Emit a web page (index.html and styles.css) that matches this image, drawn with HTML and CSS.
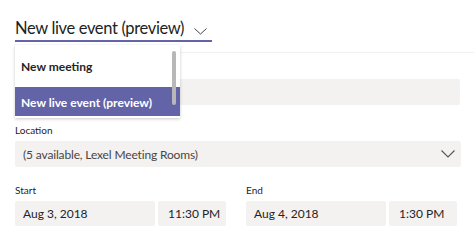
FILE: index.html
```html
<!DOCTYPE html>
<html>
<head>
<meta charset="utf-8">
<link rel="stylesheet" href="styles.css">
</head>
<body>
<div class="page">
  <div class="title-row">
    <div class="title-select">
      <span class="title-text">New live event (preview)</span>
      <svg class="chev-title" width="13" height="7" viewBox="0 0 13 7"><path d="M0.5 0.5 L6.5 6 L12.5 0.5" fill="none" stroke="#444" stroke-width="1"/></svg>
    </div>
    <div class="menu">
      <div class="menu-item">New meeting</div>
      <div class="menu-item selected">New live event (preview)</div>
      <div class="scrollbar"></div>
    </div>
  </div>
  <div class="hidden-area">
    <div class="faint-line"></div>
    <div class="field title-field"></div>
  </div>
  <div class="label loc-label">Location</div>
  <div class="field loc-field">
    <span>(5 available, Lexel Meeting Rooms)</span>
    <svg class="chev" width="14" height="8" viewBox="0 0 14 8"><path d="M0.5 0.5 L7 7 L13.5 0.5" fill="none" stroke="#555" stroke-width="1.1"/></svg>
  </div>
  <div class="times">
    <div class="group">
      <div class="label">Start</div>
      <div class="pair">
        <div class="field date">Aug 3, 2018</div>
        <div class="field time">11:30 PM</div>
      </div>
    </div>
    <div class="group">
      <div class="label">End</div>
      <div class="pair">
        <div class="field date">Aug 4, 2018</div>
        <div class="field time">1:30 PM</div>
      </div>
    </div>
  </div>
</div>
</body>
</html>
```
FILE: styles.css
```css
html, body {
  margin: 0;
  padding: 0;
  background: #ffffff;
}
body {
  font-family: Lato, "Open Sans", sans-serif;
  color: #252423;
  width: 474px;
  height: 246px;
  overflow: hidden;
}
.page {
  padding: 0 0 0 15px;
  position: relative;
}
.title-row {
  position: relative;
  height: 44px;
}
.title-select {
  position: absolute;
  left: 0;
  top: 16px;
  width: 197px;
  height: 24px;
  border-bottom: 2px solid #6264a7;
  display: flex;
  align-items: center;
}
.title-text {
  font-size: 16.5px;
  line-height: 24px;
  letter-spacing: -0.35px;
  color: #201f1e;
}
.chev-title {
  position: absolute;
  left: 179px;
  top: 12px;
}
.menu {
  position: absolute;
  left: 0;
  top: 45px;
  width: 165px;
  height: 73px;
  background: #fff;
  box-shadow: 0 1px 3px rgba(0,0,0,0.22);
  z-index: 5;
  display: flex;
  flex-direction: column;
  padding-top: 8px;
  box-sizing: border-box;
}
.menu-item {
  font-size: 12px;
  font-weight: 700;
  height: 28px;
  line-height: 28px;
  padding-left: 6px;
  color: #252423;
}
.menu-item.selected {
  margin-top: 6px;
  background: #6264a7;
  color: #fff;
  height: 29px;
  line-height: 31px;
}
.scrollbar {
  position: absolute;
  right: 4px;
  top: 6px;
  width: 4px;
  height: 54px;
  border-radius: 2px;
  background: #b8b8b8;
}
.hidden-area {
  height: 71px;
  position: relative;
}
.faint-line {
  height: 1px;
  background: #f1f1f1;
  margin-top: 8px;
}
.title-field {
  margin-top: 26px;
  height: 26px;
  width: 445px;
}
.field {
  background: #f3f2f1;
  border-radius: 2px;
  box-sizing: border-box;
}
.label {
  font-size: 10px;
  color: #252423;
  line-height: 14px;
}
.loc-field {
  margin-top: 4px;
  width: 446px;
  height: 26px;
  display: flex;
  align-items: center;
  justify-content: space-between;
  padding: 0 6px 0 8px;
  font-size: 12px;
  letter-spacing: -0.15px;
  color: #484644;
}
.times {
  display: flex;
  gap: 20px;
  margin-top: 16px;
}
.group .label {
  margin-bottom: 4px;
}
.pair {
  display: flex;
  gap: 3px;
}
.date, .time {
  height: 25px;
  display: flex;
  align-items: center;
  padding-left: 8px;
  font-size: 12px;
  color: #252423;
}
.date { width: 140px; }
.time { width: 68px; padding-left: 10px; }
```
